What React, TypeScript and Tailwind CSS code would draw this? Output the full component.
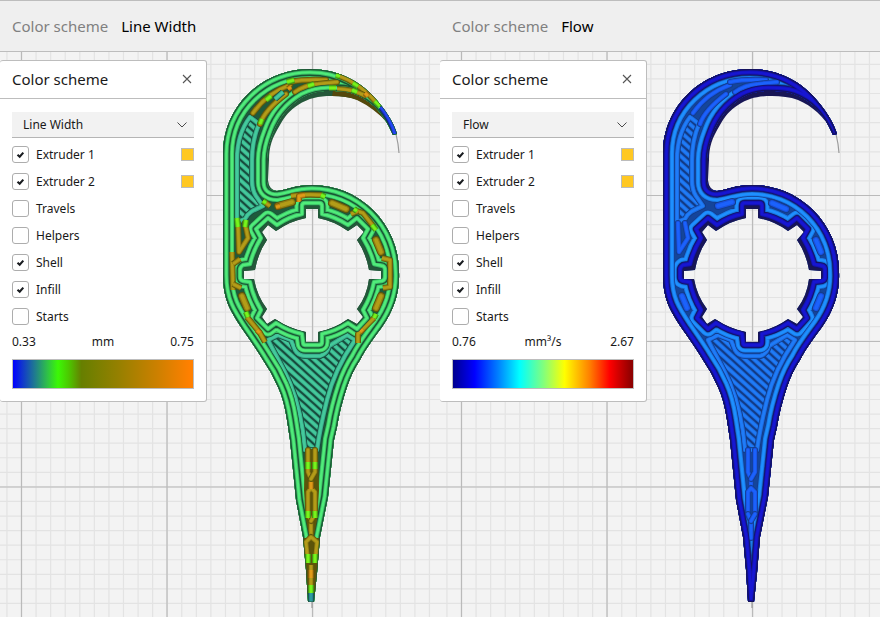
import React, { useId, useState } from 'react';

type Tone = 'wall' | 'inner' | 'skin' | 'gap' | 'lime' | 'orange' | 'tip' | 'end';

interface Shade {
  edge: string;
  mid: string;
  core: string;
}

interface Scheme {
  name: string;
  min: string;
  max: string;
  unit: React.ReactNode;
  bar: string;
  base: string;
  side: string;
  tones: Record<Tone, Shade>;
}

const lineWidth: Scheme = {
  name: 'Line Width',
  min: '0.33',
  max: '0.75',
  unit: 'mm',
  bar: 'bg-[linear-gradient(to_right,#0000ff_0%,#1034d0_5%,#1f7a90_12%,#2fc048_19%,#3cf806_25%,#4cc800_31%,#667f00_38%,#998000_60%,#cc8000_80%,#ff8000_98%)]',
  base: '#1f5a3c',
  side: '#24583a',
  tones: {
    wall: { edge: '#1a5534', mid: '#3abb64', core: '#50ec7a' },
    inner: { edge: '#1a5534', mid: '#3abb64', core: '#50ec7a' },
    skin: { edge: '#174a3c', mid: '#37ab88', core: '#44ca9c' },
    gap: { edge: '#5c540a', mid: '#948012', core: '#b39c18' },
    lime: { edge: '#3c8a14', mid: '#5cc818', core: '#78f41c' },
    orange: { edge: '#7a560a', mid: '#bb8012', core: '#e09a18' },
    tip: { edge: '#10226a', mid: '#1a36c8', core: '#2246f4' },
    end: { edge: '#174a50', mid: '#24808a', core: '#2c9ca0' },
  },
};

const flow: Scheme = {
  name: 'Flow',
  min: '0.76',
  max: '2.67',
  unit: 'mm³/s',
  bar: 'bg-[linear-gradient(to_right,#00008f_0%,#0000ff_12%,#007fff_25%,#00ffff_37%,#7fff7f_50%,#ffff00_62%,#ff7f00_76%,#ff0000_87%,#8f0000_99%)]',
  base: '#15459a',
  side: '#181656',
  tones: {
    wall: { edge: '#131264', mid: '#1513b4', core: '#1716d2' },
    inner: { edge: '#133c8c', mid: '#1a78e4', core: '#1e90ff' },
    skin: { edge: '#123a84', mid: '#1b68dc', core: '#1f7cf8' },
    gap: { edge: '#133c8c', mid: '#1952e0', core: '#1b62fc' },
    lime: { edge: '#133c8c', mid: '#1a66de', core: '#1d78fa' },
    orange: { edge: '#133c8c', mid: '#1952e0', core: '#1b62fc' },
    tip: { edge: '#131264', mid: '#1513b4', core: '#1716d2' },
    end: { edge: '#131264', mid: '#1513b4', core: '#1716d2' },
  },
};

const BODY =
  'M223 154 C223 106 262 69 310 69 C340 69 364 83 380 104 C388 114 394 124 397 134 L393 135 C386 118 374 101 354 94 C346 91 337 91 328 91 C318 91 311 93 303 97 C291 104 279 116 273 133 C269 143 267 150 267 160 L267 182 Q267 191 277 191 C290 189 296 185 312 185 A87 87 0 0 1 399 272 C400 292 394 310 382 327 C374 338 366 348 360 360 Q352 372 347 387 Q340 408 337 427 L334 440 L328 497 L320 537 L317 573 L314 602 L308 602 L306 570 L303 537 L296 500 L290 440 L287 420 Q284 400 278 387 Q272 373 263 360 C257 350 250 340 243 330 C231 312 223 300 223 275 Z';

const INNER_SIDE =
  'M394 134 C384 116 372 106 358 100 C350 97 341 96 332 96 C318 96 309 98 298 105 C290 110 285 116 280 125 C272 138 269 147 269 160 L268 180 Q269 191 278 191 L255 188 L258 135 L300 88 L345 84 Q378 92 397 134 Z';

const HOLE =
  'M306 209 L318 209 L318 218 Q334 221 348 231 L357 225 L364 232 L357 240 Q366 253 369 270 L381 271 L381 279 L369 279 Q367 296 357 309 L363 317 L357 324 L348 319 Q334 329 318 332 L318 342 L306 342 L306 332 Q290 329 275 319 L267 324 L262 317 L267 309 Q257 296 254 279 L244 279 L244 271 L255 270 Q258 253 267 240 L262 232 L268 225 L276 231 Q290 221 306 218 Z';

const GEAR =
  'M305 203 L319 203 Q322 203 322 206 L322 214 Q336 217 348 225 L357 218 L368 229 L363 238 Q371 251 374 264 L383 266 Q385 267 385 270 L385 277 Q385 280 382 281 L374 282 Q371 297 363 310 L367 318 L357 329 L348 323 Q336 331 322 334 L322 342 Q322 345 319 345 L305 345 Q303 345 303 342 L302 334 Q288 331 276 323 L268 329 L257 318 L261 310 Q253 297 250 282 L243 281 Q240 280 240 277 L240 270 Q240 267 243 265 L250 264 Q253 251 261 238 L256 229 L268 218 L277 225 Q288 217 302 214 L302 206 Q302 203 305 203 Z';

const FRAME = 'M200 50 H420 V617 H200 Z';

const STEM = 'M250 117 C240 130 237 145 237 160 L237 222 L245 219 C248 212 254 210 263 206 L256 196 Q252 190 252 180 L252 160 C252 148 254 136 259 124 Z';
const FUNNEL =
  'M268 340 L278 335 L291 340 L295 350 Q298 356 306 356 L320 356 Q327 354 329 346 L347 335 L355 340 C346 353 333 375 327 400 C322 420 319 435 317 450 L305 450 C303 425 298 402 290 383 C284 369 276 356 268 340 Z';

const beads: [string, Tone][] = [
  // hook
  ['M253 113 C262 100 276 90 290 85', 'gap'],
  ['M260 124 C264 112 274 103 286 94', 'gap'],
  ['M290 82 Q304 79 326 80', 'gap'],
  ['M295 92 Q305 85 318 84 L337 82', 'gap'],
  ['M238 223 L239 252 L248 238 L245 223', 'gap'],
  // spike
  ['M308 450 L308 472 L311 479 L311 490', 'gap'],
  ['M315 450 L315 472 L311 479', 'gap'],
  ['M308 514 L308 492 L311 488 L315 492 L315 514', 'gap'],
  ['M308 514 L311 521 L311 538', 'gap'],
  ['M315 514 L311 521', 'gap'],
];

// short wide lines between the contour and the notches
const fillers = [
  'M292 202 L278 206',
  'M332 203 L346 209',
  'M376 240 L381 252',
  'M381 296 L376 308',
  'M242 296 L247 308',
];

// only visible when the colour follows the width of the line
const widthBeads: [string, Tone][] = [
  ['M337 75 Q360 83 376 102', 'gap'],
  ['M337 89 Q352 89 366 96', 'gap'],
  ['M336 75 L340 76', 'lime'],
  ['M353 83 L358 86', 'lime'],
  ['M375 101 L380 106', 'lime'],
  ['M329 88 L336 88', 'lime'],
  ['M352 90 L357 92', 'lime'],
  ['M287 82 L294 80', 'lime'],
  ['M308 86 L314 84', 'lime'],
  ['M266 100 L271 96', 'lime'],
  ['M260 124 L262 119', 'lime'],
  ['M275 99 L283 92', 'skin'],
  ['M288 89 L291 87', 'orange'],
  ['M365 93 L368 96', 'orange'],
  ['M381 107 Q391 119 395 134', 'tip'],
  ['M291 196 Q304 194 322 195', 'gap'],
  ['M299 202 L299 196 L305 195', 'orange'],
  ['M321 195 L325 197', 'lime'],
  ['M280 206 L276 207', 'orange'],
  ['M263 201 L270 206', 'gap'],
  ['M263 201 L266 203', 'lime'],
  ['M354 210 L363 213 L374 227', 'gap'],
  ['M351 214 L358 211', 'gap'],
  ['M372 225 L376 230', 'lime'],
  ['M354 209 L357 211', 'lime'],
  ['M382 258 L390 260 L390 287 L383 288', 'gap'],
  ['M374 318 L358 334 L358 343', 'gap'],
  ['M376 314 L374 318', 'lime'],
  ['M247 317 L260 333 L265 342', 'gap'],
  ['M246 312 L248 317', 'lime'],
  ['M257 330 L260 333', 'orange'],
  ['M360 332 L363 329', 'orange'],
  ['M232 252 L233 290', 'gap'],
  ['M233 264 L240 259', 'gap'],
  ['M233 284 L241 288', 'gap'],
  ['M237 218 L238 227', 'lime'],
  ['M246 220 L245 227', 'lime'],
  ['M308 462 L308 469', 'lime'],
  ['M315 462 L315 469', 'lime'],
  ['M311 482 L311 489', 'orange'],
  ['M308 511 L308 518', 'lime'],
  ['M315 511 L315 518', 'lime'],
  ['M308 562 L306 542 L311 537 L317 542 L315 562', 'gap'],
  ['M308 554 L308 563', 'lime'],
  ['M315 554 L315 563', 'lime'],
  ['M311 565 L311 588', 'gap'],
  ['M311 570 L311 578', 'orange'],
  ['M311 585 L311 593', 'lime'],
  ['M311 593 L311 602', 'end'],
];

const layers = ['Travels', 'Helpers', 'Shell', 'Infill', 'Starts'];

const Bead = ({ d, shade, cap = 'butt' }: { d: string; shade: Shade; cap?: 'butt' | 'round' }) => (
  <g fill="none" strokeLinejoin="round" strokeLinecap={cap}>
    <path d={d} stroke={shade.edge} strokeWidth={6} />
    <path d={d} stroke={shade.mid} strokeWidth={4.4} />
    <path d={d} stroke={shade.core} strokeWidth={2.6} />
  </g>
);

const Filler = ({ d, shade }: { d: string; shade: Shade }) => (
  <g fill="none" strokeLinecap="round">
    <path d={d} stroke={shade.edge} strokeWidth={8} />
    <path d={d} stroke={shade.mid} strokeWidth={6} />
    <path d={d} stroke={shade.core} strokeWidth={3.6} />
  </g>
);

// Parallel extrusion lines at a distance from the contour
const Ring = ({ d, at, shade }: { d: string; at: number; shade: Shade }) => (
  <g fill="none" strokeLinejoin="round">
    <path d={d} stroke={shade.edge} strokeWidth={2 * (at + 2.8)} />
    <path d={d} stroke={shade.mid} strokeWidth={2 * (at + 2.1)} />
    <path d={d} stroke={shade.core} strokeWidth={2 * (at + 1.2)} />
    <path d={d} stroke={shade.mid} strokeWidth={2 * (at - 1.2)} />
    <path d={d} stroke={shade.edge} strokeWidth={2 * (at - 2.1)} />
  </g>
);

const gridStep = 14.57;

const Grid = () => (
  <g>
    {Array.from({ length: 31 }, (_, i) => {
      const x = 21.5 + (i - 1) * gridStep;
      return <path key={i} d={`M${x} 50 V700`} stroke="#e3e3e3" strokeWidth={1.2} />;
    })}
    {Array.from({ length: 46 }, (_, i) => {
      const y = 195.5 + (i - 10) * gridStep;
      return <path key={i} d={`M0 ${y} H440`} stroke="#e3e3e3" strokeWidth={1.2} />;
    })}
    <path d="M21.5 50 V700 M167 50 V700 M312.5 50 V700 M0 195.5 H440 M0 341.5 H440 M0 487 H440" stroke="#bababa" strokeWidth={1.2} />
  </g>
);

const Model = ({ scheme }: { scheme: Scheme }) => {
  const id = useId();
  const { tones } = scheme;
  const isWidth = scheme.name === 'Line Width';

  return (
    <svg viewBox="0 52 440 565" className="block w-full" aria-hidden="true">
      <defs>
        <clipPath id={`${id}-body`}>
          <path d={BODY} />
        </clipPath>
        <clipPath id={`${id}-solid`}>
          <path d={`${FRAME} ${HOLE}`} clipRule="evenodd" />
        </clipPath>
        <clipPath id={`${id}-gear`}>
          <path d={`${FRAME} ${GEAR}`} clipRule="evenodd" />
        </clipPath>
        <pattern id={`${id}-hatch`} width="6" height="6" patternUnits="userSpaceOnUse" patternTransform="rotate(42)">
          <rect width="6" height="6" fill={tones.skin.edge} />
          <rect y="1" width="6" height="4" fill={tones.skin.mid} />
          <rect y="1.8" width="6" height="2.4" fill={tones.skin.core} />
        </pattern>
      </defs>

      <Grid />
      <path d="M396 134 L398 144 M398 144 L399 153 M312 600 V608" stroke="#9b9b9b" strokeWidth={1.2} />

      <g clipPath={`url(#${id}-solid)`}>
        <path d={INNER_SIDE} fill={scheme.side} />
        {isWidth && <path d="M333 91 L345 86 Q374 92 390 125 Q374 108 357 100 Q347 96 332 96 Z" fill="#54480c" />}
        <g clipPath={`url(#${id}-body)`}>
          <path d={BODY} fill={scheme.base} />
          <path d={STEM} fill={`url(#${id}-hatch)`} />
          <path d={FUNNEL} fill={`url(#${id}-hatch)`} />
          <Bead d={STEM} shade={tones.skin} />
          <Bead d={FUNNEL} shade={tones.skin} />
          <g clipPath={`url(#${id}-gear)`}>
            <Ring d={GEAR} at={5.5} shade={tones.inner} />
          </g>
          <Ring d={BODY} at={9} shade={tones.inner} />
          {isWidth && <path d="M305 449 L318 449 L319 490 L316 540 L307 540 L304 490 Z" fill="#5c540a" />}
          {beads.map(([d, tone]) => (
            <Bead key={d} d={d} shade={tones[tone]} cap="round" />
          ))}
          {fillers.map(d => (
            <Filler key={d} d={d} shade={tones.gap} />
          ))}
          <Ring d={BODY} at={3.4} shade={tones.wall} />
          {isWidth && <path d="M300 538 L324 538 L320 594 L304 594 Z" fill="#5c540a" />}
          {isWidth && widthBeads.map(([d, tone]) => <Bead key={d} d={d} shade={tones[tone]} />)}
          <path d={GEAR} fill={scheme.side} />
          <Bead d={GEAR} shade={tones.wall} />
        </g>
      </g>
      <path d={BODY} fill="none" stroke={scheme.side} strokeWidth={1} clipPath={`url(#${id}-body)`} />
    </svg>
  );
};

const CheckRow = ({ label, checked, swatch }: { label: string; checked: boolean; swatch?: boolean }) => {
  const [on, setOn] = useState(checked);

  return (
    <label className="flex h-[27px] items-center gap-[7px] text-xs">
      <span className="relative size-[17px] shrink-0">
        <input
          type="checkbox"
          checked={on}
          onChange={e => setOn(e.target.checked)}
          className="block size-full appearance-none rounded-[3px] border border-[#adadad] bg-white"
        />
        {on && (
          <svg viewBox="0 0 17 17" className="pointer-events-none absolute inset-0 size-full" fill="none">
            <path d="M5.5 8.7 L7.7 10.7 L11.3 6.6" stroke="#191c20" strokeWidth={2.1} />
          </svg>
        )}
      </span>
      <span className="flex-1">{label}</span>
      {swatch && <span className="size-[13px] border border-[#bcbcbc] bg-[#ffc823]" />}
    </label>
  );
};

const SchemePanel = ({ scheme }: { scheme: Scheme }) => (
  <section className="absolute left-0 top-2 w-[207px] rounded-[3px] border border-l-0 border-[#bdbdbd] bg-white">
    <div className="flex h-[38px] items-center justify-between border-b border-[#bdbdbd] px-3 pb-0.5">
      <h2 className="text-[15px] leading-5">Color scheme</h2>
      <button type="button" aria-label="Close" className="flex size-3.5 items-center justify-center">
        <svg viewBox="0 0 10 10" className="size-2.5" stroke="#555" strokeWidth={1.1}>
          <path d="M1 1 L9 9 M9 1 L1 9" />
        </svg>
      </button>
    </div>
    <div className="px-3 pb-3 pt-[13px]">
      <div className="relative mb-[3px]">
        <select
          aria-label="Color scheme"
          defaultValue={scheme.name}
          className="block h-[26px] w-full appearance-none border-b border-[#b5b5b5] bg-[#f2f2f2] px-[11px] text-xs outline-none"
        >
          <option>Line Width</option>
          <option>Flow</option>
        </select>
        <svg viewBox="0 0 10 6" className="pointer-events-none absolute right-[7px] top-2.5 h-1.5 w-2.5" fill="none" stroke="#4a4a4a">
          <path d="M0.5 0.5 L5 5 L9.5 0.5" />
        </svg>
      </div>
      <CheckRow label="Extruder 1" checked swatch />
      <CheckRow label="Extruder 2" checked swatch />
      {layers.map(name => (
        <CheckRow key={name} label={name} checked={name === 'Shell' || name === 'Infill'} />
      ))}
      <div className="flex h-6 items-center justify-between text-xs">
        <span>{scheme.min}</span>
        <span>{scheme.unit}</span>
        <span>{scheme.max}</span>
      </div>
      <div className={`mt-[5px] h-[30px] border border-[#bdbdbd] ${scheme.bar}`} />
    </div>
  </section>
);

const Preview = ({ scheme }: { scheme: Scheme }) => (
  <div className="flex min-w-0 flex-1 flex-col">
    <header className="flex h-[52px] items-center gap-[13px] border-y border-[#bdbdbd] bg-[#efefef] px-3 text-[15px]">
      <span className="text-[#808080]">Color scheme</span>
      <span className="text-black">{scheme.name}</span>
    </header>
    <main className="relative flex-1 overflow-hidden">
      <Model scheme={scheme} />
      <SchemePanel scheme={scheme} />
    </main>
  </div>
);

export default function App() {
  return (
    <div className="flex min-h-screen bg-[#f3f3f3] font-['Noto_Sans',sans-serif] text-[#191919]">
      <Preview scheme={lineWidth} />
      <Preview scheme={flow} />
    </div>
  );
}
